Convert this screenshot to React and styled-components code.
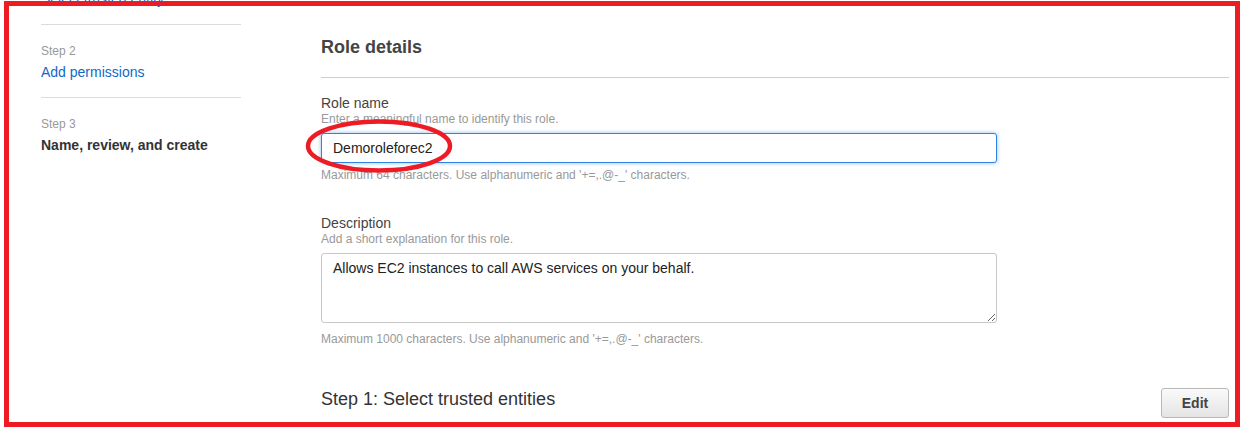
import React from "react";
import styled, { createGlobalStyle } from "styled-components";

const Global = createGlobalStyle`
  html, body { margin: 0; padding: 0; background: #fff; }
  body { font-family: "Liberation Sans", Arial, sans-serif; overflow: hidden; }
`;

const Viewport = styled.div`
  position: relative;
  width: 1243px;
  height: 428px;
  overflow: hidden;
  background: #fff;
`;

const Page = styled.div`
  display: flex;
  gap: 80px;
  padding: 0 14px 0 41px;
  margin-top: -48px;
`;

const Sidebar = styled.nav`
  width: 200px;
  flex: none;
  display: flex;
  flex-direction: column;
`;

const StepItem = styled.div`
  padding: 18px 0 16px;
  border-top: ${(p) => (p.$first ? "none" : "1px solid #dcdcdc")};
  display: flex;
  flex-direction: column;
  gap: 4px;
`;

const StepLabel = styled.div`
  font-size: 12px;
  line-height: 16px;
  color: #999;
`;

const StepLink = styled.a`
  font-size: 14px;
  line-height: 18px;
  color: ${(p) => (p.$current ? "#333" : "#0f6ac6")};
  font-weight: ${(p) => (p.$current ? 700 : 400)};
  text-decoration: none;
`;

const Main = styled.main`
  flex: 1;
  padding-top: 84px;
`;

const SectionTitle = styled.h2`
  margin: 0;
  font-size: 18px;
  line-height: 22px;
  font-weight: 700;
  color: #444;
  padding-bottom: 19px;
  border-bottom: 1px solid #cfcfcf;
`;

const Field = styled.div`
  display: flex;
  flex-direction: column;
  margin-top: ${(p) => p.$top}px;
`;

const Label = styled.label`
  font-size: 14px;
  line-height: 17px;
  color: #444;
`;

const Hint = styled.div`
  font-size: 12px;
  line-height: 15px;
  color: #999;
  margin-top: ${(p) => p.$top || 0}px;
`;

const InputWrap = styled.div`
  position: relative;
  width: 676px;
  margin-top: 6px;
`;

const TextInput = styled.input`
  box-sizing: border-box;
  width: 676px;
  height: 30px;
  padding: 0 11px;
  border: 1px solid #2f84e0;
  border-radius: 3px;
  box-shadow: 0 0 4px rgba(47, 132, 224, 0.55);
  font-family: "Liberation Sans", Arial, sans-serif;
  font-size: 14px;
  color: #222;
  outline: none;
`;

const TextArea = styled.textarea`
  box-sizing: border-box;
  width: 676px;
  height: 70px;
  margin-top: 6px;
  padding: 6px 11px;
  border: 1px solid #c8c8c8;
  border-radius: 3px;
  font-family: "Liberation Sans", Arial, sans-serif;
  font-size: 14px;
  line-height: 17px;
  color: #222;
  resize: both;
  outline: none;
  display: block;
`;

const Annotation = styled.svg`
  position: absolute;
  left: -16px;
  top: -14px;
  width: 150px;
  height: 56px;
  overflow: visible;
  pointer-events: none;
`;

const StepRow = styled.div`
  display: flex;
  align-items: center;
  justify-content: space-between;
  margin-top: 33px;
`;

const StepTitle = styled.h3`
  margin: 0;
  font-size: 18px;
  line-height: 22px;
  font-weight: 400;
  color: #333;
`;

const EditButton = styled.button`
  width: 68px;
  height: 30px;
  border: 1px solid #b8b8b8;
  border-radius: 3px;
  background: linear-gradient(#fafafa, #e4e4e4);
  font-family: "Liberation Sans", Arial, sans-serif;
  font-size: 14px;
  font-weight: 700;
  color: #444;
  margin-top: 8px;
`;

const Frame = styled.div`
  position: absolute;
  left: 4px;
  top: 1px;
  width: 1236px;
  height: 426px;
  box-sizing: border-box;
  border: 5px solid #ed1c24;
  pointer-events: none;
`;

export default function App() {
  return (
    <Viewport>
      <Global />
      <Page>
        <Sidebar>
          <StepItem $first>
            <StepLabel>Step 1</StepLabel>
            <StepLink href="#">Select trusted entity</StepLink>
          </StepItem>
          <StepItem>
            <StepLabel>Step 2</StepLabel>
            <StepLink href="#">Add permissions</StepLink>
          </StepItem>
          <StepItem>
            <StepLabel>Step 3</StepLabel>
            <StepLink $current>Name, review, and create</StepLink>
          </StepItem>
        </Sidebar>
        <Main>
          <SectionTitle>Role details</SectionTitle>
          <Field $top={17}>
            <Label>Role name</Label>
            <Hint>Enter a meaningful name to identify this role.</Hint>
            <InputWrap>
              <TextInput defaultValue="Demoroleforec2" />
              <Annotation viewBox="0 0 150 56">
                <ellipse cx="74" cy="27" rx="71" ry="24.5" fill="none" stroke="#ed1c24" strokeWidth="4.5" />
              </Annotation>
            </InputWrap>
            <Hint $top={5}>Maximum 64 characters. Use alphanumeric and '+=,.@-_' characters.</Hint>
          </Field>
          <Field $top={32}>
            <Label>Description</Label>
            <Hint>Add a short explanation for this role.</Hint>
            <TextArea defaultValue="Allows EC2 instances to call AWS services on your behalf." />
            <Hint $top={9}>Maximum 1000 characters. Use alphanumeric and '+=,.@-_' characters.</Hint>
          </Field>
          <StepRow>
            <StepTitle>Step 1: Select trusted entities</StepTitle>
            <EditButton>Edit</EditButton>
          </StepRow>
        </Main>
      </Page>
      <Frame />
    </Viewport>
  );
}
